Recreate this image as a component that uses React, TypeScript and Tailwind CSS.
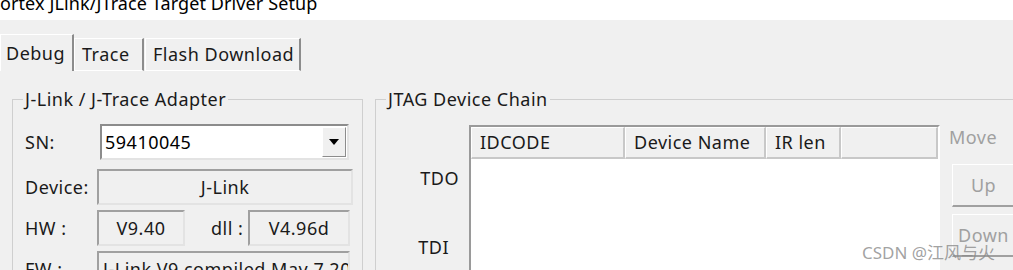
import React from "react"

const font = { fontFamily: '"Noto Sans", "Open Sans", Arial, sans-serif' }

function Sunken({ className = "", children }: { className?: string; children?: React.ReactNode }) {
  return (
    <div
      className={`border-2 border-t-[#a0a0a0] border-l-[#a0a0a0] border-b-[#e3e3e3] border-r-[#e3e3e3] flex items-center ${className}`}
    >
      {children}
    </div>
  )
}

function Tab({ label, active, className = "" }: { label: string; active?: boolean; className?: string }) {
  return (
    <div
      className={`flex items-center border-t border-l border-t-white border-l-white border-r-2 border-r-[#8c8c8c] ${
        active ? "h-[37px] pl-[5px] bg-[#f0f0f0]" : "h-[33px] pl-[7px] border-b border-b-white bg-[#f0f0f0]"
      } ${className}`}
    >
      {label}
    </div>
  )
}

function HeaderCell({ label, className = "" }: { label: string; className?: string }) {
  return (
    <div
      className={`h-full flex items-center pl-[8px] border-r-2 border-r-[#c8c8c8] border-b-2 border-b-[#c8c8c8] border-t border-l border-t-white border-l-white ${className}`}
    >
      {label}
    </div>
  )
}

function WinButton({ label, className = "" }: { label: string; className?: string }) {
  return (
    <div
      className={`w-[64px] h-[43px] flex items-center justify-center text-[#a0a0a0] border-t border-l border-t-white border-l-white border-r-2 border-b-2 border-r-[#a0a0a0] border-b-[#a0a0a0] ${className}`}
    >
      {label}
    </div>
  )
}

export default function App() {
  return (
    <div
      className="relative w-[1013px] h-[270px] overflow-hidden bg-[#f0f0f0] text-[18px] tracking-[0.5px] text-[#1a1a1a]"
      style={font}
    >
      {/* title bar, cut off at top */}
      <div className="h-[20px] bg-white overflow-hidden">
        <div className="-mt-[10px] leading-[26px] whitespace-nowrap text-[18px] tracking-[0.1px] text-black">
          ortex JLink/JTrace Target Driver Setup
        </div>
      </div>

      {/* tabs */}
      <div className="h-[51px] flex items-end">
        <Tab label="Debug" active className="w-[74px]" />
        <Tab label="Trace" className="w-[70px]" />
        <Tab label="Flash Download" className="w-[156px] ml-[1px]" />
      </div>

      {/* page */}
      <div className="flex pl-[12px] pt-[18px] gap-[12px]">
        {/* adapter group */}
        <fieldset className="w-[351px] h-[200px] border border-[#cfcfcf] shrink-0">
          <legend className="ml-[10px] px-[2px] leading-[20px]">J-Link / J-Trace Adapter</legend>

          <div className="pl-[12px]">
            <div className="flex items-center mt-[15px]">
              <div className="w-[75px]">SN:</div>
              <div className="w-[249px] h-[36px] bg-white flex border-2 border-t-[#8c8c8c] border-l-[#8c8c8c] border-b-[#e3e3e3] border-r-[#e3e3e3]">
                <div className="flex-1 flex items-center pl-[3px] text-black">59410045</div>
                <div className="w-[24px] my-[1px] mr-[1px] bg-[#f0f0f0] flex items-center justify-center border-t border-l border-t-white border-l-white border-r border-b border-r-[#8c8c8c] border-b-[#8c8c8c]">
                  <svg width="10" height="6" viewBox="0 0 10 6">
                    <path d="M0 0h10L5 6z" fill="#000" />
                  </svg>
                </div>
              </div>
            </div>

            <div className="flex items-center mt-[9px]">
              <div className="w-[72px]">Device:</div>
              <Sunken className="w-[256px] h-[36px] justify-center">J-Link</Sunken>
            </div>

            <div className="flex items-center mt-[5px]">
              <div className="w-[72px]">HW :</div>
              <Sunken className="w-[88px] h-[36px] justify-center">V9.40</Sunken>
              <div className="w-[63px] pl-[26px]">dll :</div>
              <Sunken className="w-[102px] h-[36px] justify-center">V4.96d</Sunken>
            </div>

            <div className="flex items-center mt-[5px]">
              <div className="w-[72px]">FW :</div>
              <Sunken className="w-[253px] h-[36px] pl-[4px] whitespace-nowrap overflow-hidden">
                J-Link V9 compiled May  7 2021
              </Sunken>
            </div>
          </div>
        </fieldset>

        {/* JTAG chain group */}
        <fieldset className="w-[700px] h-[200px] border border-[#cfcfcf] shrink-0">
          <legend className="ml-[10px] px-[2px] leading-[20px]">JTAG Device Chain</legend>

          <div className="flex mt-[16px]">
            <div className="w-[93px] flex flex-col items-end pr-[10px] pt-[40px] gap-[42px]">
              <div>TDO</div>
              <div className="pr-[10px]">TDI</div>
            </div>

            <div className="w-[471px] h-[160px] bg-white border-2 border-t-[#9a9a9a] border-l-[#9a9a9a] border-b-white border-r-white">
              <div className="h-[32px] flex bg-[#f0f0f0]">
                <HeaderCell label="IDCODE" className="w-[154px]" />
                <HeaderCell label="Device Name" className="w-[141px]" />
                <HeaderCell label="IR len" className="w-[75px]" />
                <HeaderCell label="" className="flex-1 border-r-0" />
              </div>
            </div>

            <div className="ml-[9px] flex flex-col">
              <div className="text-[#a0a0a0] leading-[22px] mt-[1px]">Move</div>
              <WinButton label="Up" className="mt-[16px] ml-[3px]" />
              <WinButton label="Down" className="mt-[7px] ml-[3px]" />
            </div>
          </div>
        </fieldset>
      </div>

      {/* watermark */}
      <div
        className="absolute left-[862px] top-[240px] text-[17px] tracking-normal text-[#8a8a8a]/80 whitespace-nowrap"
        style={{ fontFamily: '"Noto Sans", "Noto Sans CJK SC", sans-serif' }}
      >
        CSDN @江风与火
      </div>
    </div>
  )
}
